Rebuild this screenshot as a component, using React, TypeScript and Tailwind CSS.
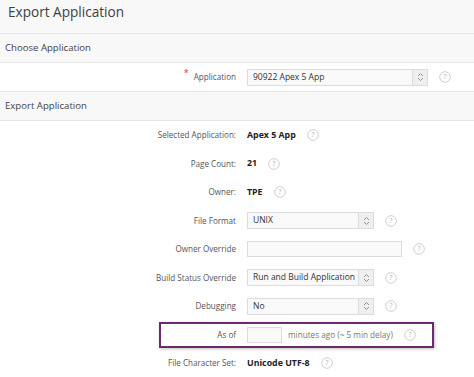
import React from 'react';

const font = { fontFamily: '"Open Sans", "Noto Sans", sans-serif' };

const HelpIcon = () => (
  <svg width="12" height="12" viewBox="0 0 12 12" className="shrink-0">
    <circle cx="6" cy="6" r="5.3" fill="none" stroke="#c9c9c9" strokeWidth="0.9" />
    <text x="6" y="8.4" textAnchor="middle" fontSize="7" fill="#b5b5b5" fontFamily="Open Sans, sans-serif">
      ?
    </text>
  </svg>
);

const Arrows = () => (
  <svg width="7" height="10" viewBox="0 0 7 10">
    <path d="M1 4 L3.5 1.5 L6 4" fill="none" stroke="#8a8a8a" strokeWidth="0.9" />
    <path d="M1 6 L3.5 8.5 L6 6" fill="none" stroke="#8a8a8a" strokeWidth="0.9" />
  </svg>
);

const Select = ({ value, width }: { value: string; width: string }) => (
  <div className={`flex h-[17px] ${width} border border-[#dcdcdc] bg-[#f9f9f9]`}>
    <div className="flex flex-1 items-center overflow-hidden whitespace-nowrap pl-[5px] text-[8.5px] text-[#333]">
      {value}
    </div>
    <div className="flex w-[15px] shrink-0 items-center justify-center border-l border-[#dcdcdc] bg-[#efefef]">
      <Arrows />
    </div>
  </div>
);

const Row = ({ label, children }: { label: string; children: React.ReactNode }) => (
  <div className="flex h-[28.5px] items-center">
    <div className="w-[236px] shrink-0 whitespace-nowrap text-right text-[8.1px] text-[#555]">{label}</div>
    <div className="ml-[11px] flex items-center gap-[11px]">{children}</div>
  </div>
);

export default function App() {
  return (
    <div className="h-[377px] w-[474px] overflow-hidden bg-white" style={font}>
      {/* Page title */}
      <div className="h-[34px] border-b border-[#e6e6e6] bg-[#f8f8f8] pl-[8px] pt-[1px] text-[13.6px] leading-[22px] text-[#404040]">
        Export Application
      </div>

      {/* Choose Application */}
      <div className="flex h-[29px] items-center border-b border-[#e6e6e6] bg-[#f8f8f8] pl-[5px] text-[9.6px] text-[#444]">
        Choose Application
      </div>
      <div className="flex h-[29px] items-center border-b border-[#e6e6e6]">
        <div className="w-[236px] shrink-0 text-right text-[8.1px] text-[#555]">
          <span className="relative -top-[4px] mr-[5px] text-[9px] text-[#e03030]">*</span>
          Application
        </div>
        <div className="ml-[11px] flex items-center gap-[11px]">
          <Select value="90922 Apex 5 App" width="w-[181px]" />
          <HelpIcon />
        </div>
      </div>

      {/* Export Application */}
      <div className="flex h-[29px] items-center border-b border-[#e6e6e6] bg-[#f8f8f8] pl-[5px] text-[9.6px] text-[#444]">
        Export Application
      </div>

      <div className="flex flex-col">
        <Row label="Selected Application:">
          <span className="text-[8.8px] font-bold text-[#222]">Apex 5 App</span>
          <HelpIcon />
        </Row>
        <Row label="Page Count:">
          <span className="text-[8.8px] font-bold text-[#222]">21</span>
          <HelpIcon />
        </Row>
        <Row label="Owner:">
          <span className="text-[8.8px] font-bold text-[#222]">TPE</span>
          <HelpIcon />
        </Row>
        <Row label="File Format">
          <Select value="UNIX" width="w-[127px]" />
          <HelpIcon />
        </Row>
        <Row label="Owner Override">
          <div className="h-[16px] w-[155px] border border-[#dcdcdc] bg-[#fafafa]" />
          <HelpIcon />
        </Row>
        <Row label="Build Status Override">
          <Select value="Run and Build Application" width="w-[127px]" />
          <HelpIcon />
        </Row>
        <Row label="Debugging">
          <Select value="No" width="w-[127px]" />
          <HelpIcon />
        </Row>
        <div className="relative">
          <Row label="As of">
            <div className="flex items-center gap-[6px]">
              <div className="h-[16px] w-[35px] border border-[#dcdcdc] bg-[#fafafa]" />
              <span className="whitespace-nowrap text-[8.2px] text-[#777]">minutes ago (~ 5 min delay)</span>
            </div>
            <HelpIcon />
          </Row>
          {/* highlight annotation */}
          <div className="pointer-events-none absolute left-[159px] top-[1px] h-[26px] w-[275px] border-2 border-[#6b2a6e] shadow-[1px_1px_3px_rgba(0,0,0,0.25)]" />
        </div>
        <Row label="File Character Set:">
          <span className="text-[8.8px] font-bold text-[#222]">Unicode UTF-8</span>
          <HelpIcon />
        </Row>
      </div>
    </div>
  );
}
